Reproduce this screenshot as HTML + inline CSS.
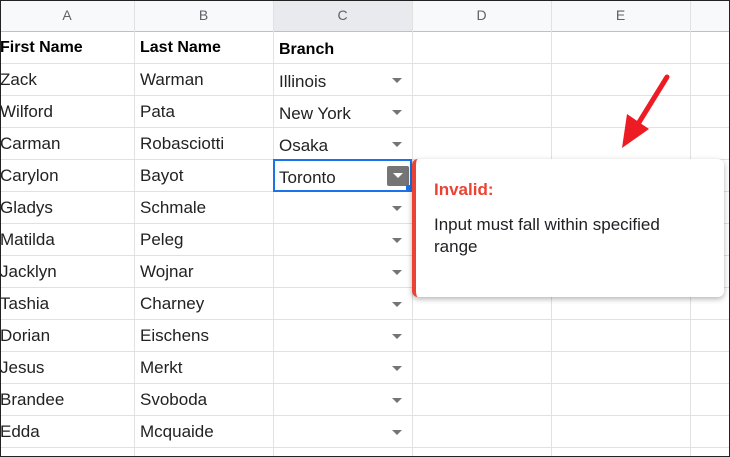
<!DOCTYPE html><html><head><style>
body{margin:0;width:730px;height:457px;overflow:hidden;background:#fff;font-family:"Liberation Sans",sans-serif;}
#f{position:absolute;left:0;top:0;width:730px;height:457px;overflow:hidden;}
.h{position:absolute;top:0;height:31px;background:#f8f9fa;border-bottom:1px solid #c0c0c0;color:#5f6368;font-size:14px;line-height:31px;text-align:center;}
.vl{position:absolute;top:0;width:1px;height:460px;background:#e1e1e1;}
.hl{position:absolute;left:0;width:730px;height:1px;background:#e1e1e1;}
.t{position:absolute;font-size:17px;color:#222;line-height:32px;white-space:nowrap;}
.b{font-weight:bold;color:#000;font-size:16px;}
.dd{position:absolute;left:392px;width:0;height:0;border-left:5px solid transparent;border-right:5px solid transparent;border-top:5px solid #757575;}
</style></head><body><div id="f">
<div class="h" style="left:0;width:134px">A</div>
<div class="h" style="left:134px;width:139px">B</div>
<div class="h" style="left:273px;width:139px;background:#e8eaed">C</div>
<div class="h" style="left:412px;width:139px">D</div>
<div class="h" style="left:551px;width:139px">E</div>
<div class="h" style="left:690px;width:40px"></div>
<div class="vl" style="left:134px"></div><div class="vl" style="left:273px"></div><div class="vl" style="left:412px"></div><div class="vl" style="left:551px"></div><div class="vl" style="left:690px"></div>
<div class="hl" style="top:63px"></div><div class="hl" style="top:95px"></div><div class="hl" style="top:127px"></div><div class="hl" style="top:159px"></div><div class="hl" style="top:191px"></div><div class="hl" style="top:223px"></div><div class="hl" style="top:255px"></div><div class="hl" style="top:287px"></div><div class="hl" style="top:319px"></div><div class="hl" style="top:351px"></div><div class="hl" style="top:383px"></div><div class="hl" style="top:415px"></div><div class="hl" style="top:447px"></div>
<div class="t b" style="left:0;top:32px">First Name</div><div class="t b" style="left:140px;top:32px">Last Name</div><div class="t b" style="left:279px;top:34px">Branch</div>
<div class="t" style="left:0;top:64px">Zack</div><div class="t" style="left:140px;top:64px">Warman</div><div class="t" style="left:279px;top:66px">Illinois</div>
<div class="t" style="left:0;top:96px">Wilford</div><div class="t" style="left:140px;top:96px">Pata</div><div class="t" style="left:279px;top:98px">New York</div>
<div class="t" style="left:0;top:128px">Carman</div><div class="t" style="left:140px;top:128px">Robasciotti</div><div class="t" style="left:279px;top:130px">Osaka</div>
<div class="t" style="left:0;top:160px">Carylon</div><div class="t" style="left:140px;top:160px">Bayot</div><div class="t" style="left:279px;top:162px">Toronto</div>
<div class="t" style="left:0;top:192px">Gladys</div><div class="t" style="left:140px;top:192px">Schmale</div>
<div class="t" style="left:0;top:224px">Matilda</div><div class="t" style="left:140px;top:224px">Peleg</div>
<div class="t" style="left:0;top:256px">Jacklyn</div><div class="t" style="left:140px;top:256px">Wojnar</div>
<div class="t" style="left:0;top:288px">Tashia</div><div class="t" style="left:140px;top:288px">Charney</div>
<div class="t" style="left:0;top:320px">Dorian</div><div class="t" style="left:140px;top:320px">Eischens</div>
<div class="t" style="left:0;top:352px">Jesus</div><div class="t" style="left:140px;top:352px">Merkt</div>
<div class="t" style="left:0;top:384px">Brandee</div><div class="t" style="left:140px;top:384px">Svoboda</div>
<div class="t" style="left:0;top:416px">Edda</div><div class="t" style="left:140px;top:416px">Mcquaide</div>
<div class="dd" style="top:78px"></div><div class="dd" style="top:110px"></div><div class="dd" style="top:142px"></div>
<div class="dd" style="top:206px"></div><div class="dd" style="top:238px"></div><div class="dd" style="top:270px"></div><div class="dd" style="top:302px"></div><div class="dd" style="top:334px"></div><div class="dd" style="top:366px"></div><div class="dd" style="top:398px"></div><div class="dd" style="top:430px"></div>
<div style="position:absolute;left:273px;top:159px;width:135px;height:29px;border:2px solid #1a73e8"></div>
<div style="position:absolute;left:387px;top:166px;width:22px;height:20px;background:#757575;border-radius:2px"></div>
<div class="dd" style="left:393px;top:173px;border-top-color:#fff"></div>
<div style="position:absolute;left:406px;top:185px;width:6px;height:6px;background:#1a73e8"></div>
<div style="position:absolute;left:412px;top:159px;width:312px;height:138px;background:#fff;border-left:4px solid #ea4335;border-radius:6px;box-shadow:0 2px 6px rgba(0,0,0,.3);box-sizing:border-box;">
<div style="position:absolute;left:18px;top:21px;color:#ea4335;font-weight:bold;font-size:17px">Invalid:</div>
<div style="position:absolute;left:18px;top:55px;color:#202124;font-size:17px;line-height:22px;width:260px">Input must fall within specified range</div>
</div>
<svg style="position:absolute;left:0;top:0" width="730" height="457"><line x1="667" y1="77" x2="638" y2="124" stroke="#ed1c24" stroke-width="5" stroke-linecap="round"/><polygon points="622,148 627,114 649,129" fill="#ed1c24"/></svg>
<div style="position:absolute;left:0;top:0;width:728px;height:455px;border:1px solid #222"></div>
</div></body></html>
